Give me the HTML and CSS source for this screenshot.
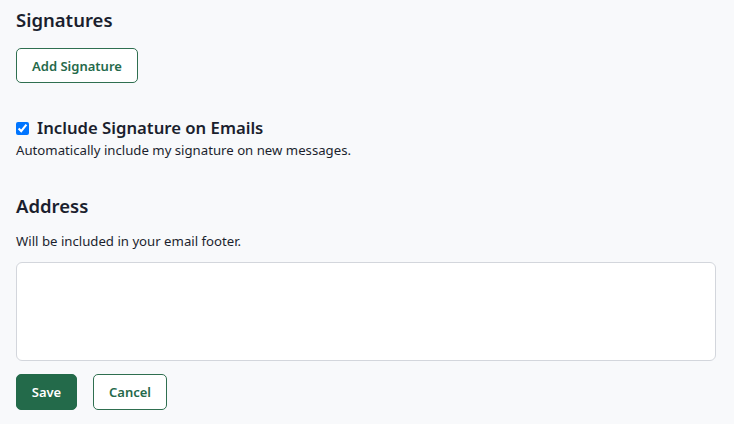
FILE: index.html
```html
<!DOCTYPE html>
<html lang="en">
<head>
<meta charset="utf-8">
<title>Signatures</title>
<link rel="stylesheet" href="styles.css">
</head>
<body>
<div class="page">
  <h2 class="heading">Signatures</h2>
  <button class="btn btn-outline btn-add" type="button">Add Signature</button>

  <div class="check-row">
    <input type="checkbox" id="inc" class="check" checked>
    <label for="inc" class="check-label">Include Signature on Emails</label>
  </div>
  <p class="help">Automatically include my signature on new messages.</p>

  <h2 class="heading heading-address">Address</h2>
  <p class="help help-address">Will be included in your email footer.</p>
  <textarea class="area"></textarea>

  <div class="actions">
    <button class="btn btn-primary" type="button">Save</button>
    <button class="btn btn-outline btn-cancel" type="button">Cancel</button>
  </div>
</div>
</body>
</html>
```

FILE: styles.css
```css
html, body {
  margin: 0;
  padding: 0;
  background: #f8f9fb;
}
body {
  font-family: "Noto Sans", "Open Sans", sans-serif;
  color: #1b1f2e;
}
.page {
  padding: 8px 18px 0 16px;
  display: flex;
  flex-direction: column;
  align-items: flex-start;
}
.heading {
  margin: 0;
  font-size: 18.5px;
  line-height: 24px;
  font-weight: 600;
  color: #1b1f2e;
}
.btn {
  font-family: inherit;
  font-size: 13px;
  font-weight: 600;
  border-radius: 5px;
  cursor: pointer;
  box-sizing: border-box;
  padding: 0;
}
.btn-outline {
  background: #ffffff;
  color: #25694a;
  border: 1px solid #2f6f50;
}
.btn-add {
  margin-top: 16px;
  width: 122px;
  height: 35px;
}
.check-row {
  margin-top: 33px;
  display: flex;
  align-items: center;
  height: 24px;
}
.check {
  margin: 0 8px 0 0;
  width: 13px;
  height: 13px;
}
.check-label {
  font-size: 16.7px;
  line-height: 24px;
  font-weight: 600;
  color: #1b1f2e;
}
.help {
  margin: 0;
  font-size: 13.2px;
  line-height: 20px;
  color: #1b1f2e;
}
.heading-address {
  margin-top: 34px;
}
.help-address {
  margin-top: 13px;
}
.area {
  margin-top: 11px;
  width: 100%;
  height: 99px;
  box-sizing: border-box;
  border: 1px solid #d3d6dc;
  border-radius: 6px;
  background: #ffffff;
  resize: none;
  font-family: inherit;
}
.actions {
  margin-top: 13px;
  display: flex;
  gap: 16px;
}
.btn-primary {
  width: 61px;
  height: 36px;
  background: #236a4a;
  color: #ffffff;
  border: 1px solid #236a4a;
}
.btn-cancel {
  width: 74px;
  height: 36px;
}
```
